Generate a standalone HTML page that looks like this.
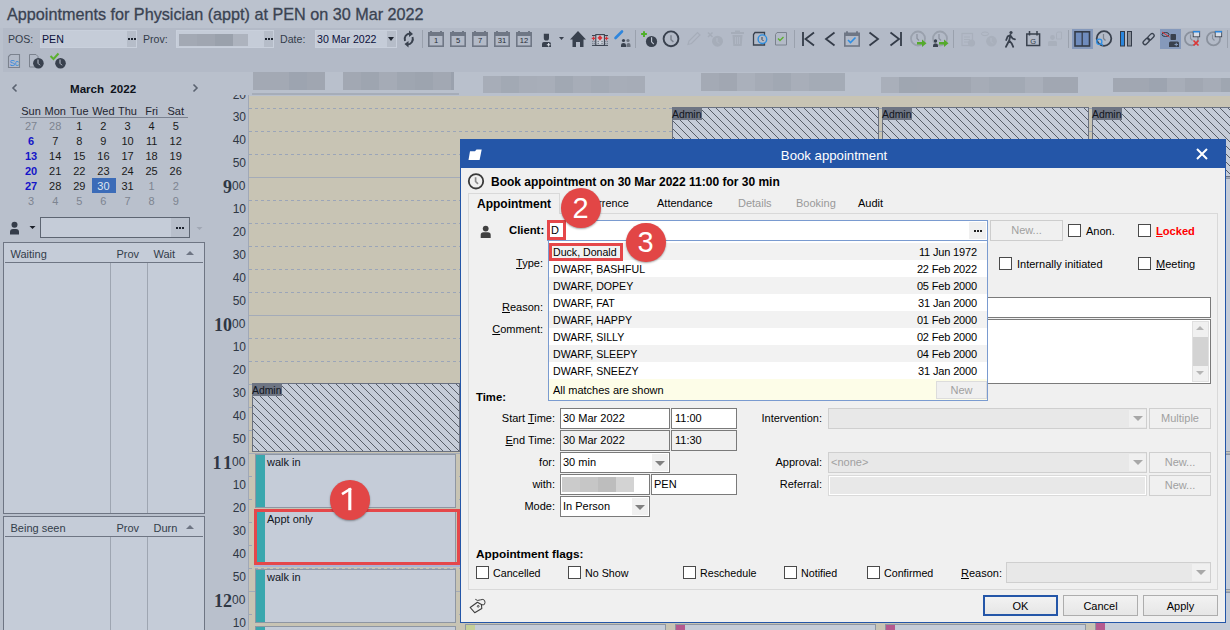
<!DOCTYPE html>
<html><head><meta charset="utf-8">
<style>
*{margin:0;padding:0;box-sizing:border-box}
html,body{width:1230px;height:630px;overflow:hidden;background:#b9c0cc;font-family:"Liberation Sans",sans-serif;font-size:11px;color:#333c4a}
.a{position:absolute}
.t{position:absolute;white-space:pre;line-height:13px}
svg{position:absolute;overflow:visible}
</style></head><body>
<!-- title -->
<div class="a" style="left:0;top:0;width:1230px;height:28px;background:#bbc2ce"></div>
<div class="t" style="left:7px;top:4px;font-size:16.2px;line-height:20px;color:#3a4352;-webkit-text-stroke:0.3px #3a4352">Appointments for Physician (appt) at PEN on 30 Mar 2022</div>
<!-- toolbar band -->
<div id="tb" class="a" style="left:3px;top:28px;width:1227px;height:44px;background:#b3bac7"></div>

<!-- toolbar row1 -->
<div class="t" style="left:8px;top:33px;font-size:10.6px">POS:</div>
<div class="a" style="left:40px;top:30px;width:97px;height:18px;background:#c5ccd8;border:1px solid #c9d0dc"></div>
<div class="a" style="left:127px;top:31px;width:9px;height:16px;background:#b6bdc9"></div>
<div class="t" style="left:42px;top:33px;font-size:10.6px;color:#0a0f3a">PEN</div>
<div class="a" style="left:128px;top:38px;width:2px;height:2px;background:#1e2530;box-shadow:3px 0 #1e2530,6px 0 #1e2530"></div>
<div class="t" style="left:143px;top:33px;font-size:10.6px">Prov:</div>
<div class="a" style="left:176px;top:30px;width:98px;height:18px;background:#c5ccd8;border:1px solid #c9d0dc"></div>
<div class="a" style="left:179px;top:34px;width:69px;height:12px;background:linear-gradient(90deg,#a3a9b4 0 18px,#a0a6b1 18px 36px,#9aa1ac 36px 54px,#adb3be 54px)"></div>
<div class="a" style="left:264px;top:31px;width:9px;height:16px;background:#b6bdc9"></div>
<div class="a" style="left:265px;top:38px;width:2px;height:2px;background:#1e2530;box-shadow:3px 0 #1e2530,6px 0 #1e2530"></div>
<div class="t" style="left:280px;top:33px;font-size:10.6px">Date:</div>
<div class="a" style="left:315px;top:30px;width:82px;height:18px;background:#c5ccd8;border:1px solid #c9d0dc"></div>
<div class="a" style="left:387px;top:31px;width:9px;height:16px;background:#b6bdc9"></div>
<div class="t" style="left:317px;top:33px;font-size:10.6px;color:#0a0f3a">30 Mar 2022</div>
<div class="a" style="left:388px;top:37px;width:0;height:0;border-left:3.5px solid transparent;border-right:3.5px solid transparent;border-top:4px solid #1e2530"></div>
<svg class="a" style="left:0;top:0" width="1230" height="72" viewBox="0 0 1230 72" font-family="Liberation Sans">
<g fill="none" stroke="#39414e" stroke-width="2"><path d="M405 41 A5.5 5.5 0 0 1 410.5 33.5"/><path d="M412.5 37 A5.5 5.5 0 0 1 407 44.5"/></g><path d="M409 30.5 L413 34 L409 37 Z M408.5 47.5 L404.5 44 L408.5 41 Z" fill="#39414e"/>
<line x1="422.5" y1="30" x2="422.5" y2="48" stroke="#9aa1ad" stroke-width="1"/>
<line x1="635.5" y1="30" x2="635.5" y2="48" stroke="#9aa1ad" stroke-width="1"/>
<line x1="794.5" y1="30" x2="794.5" y2="48" stroke="#9aa1ad" stroke-width="1"/>
<line x1="953.5" y1="30" x2="953.5" y2="48" stroke="#9aa1ad" stroke-width="1"/>
<line x1="1068.5" y1="30" x2="1068.5" y2="48" stroke="#9aa1ad" stroke-width="1"/>
<line x1="1227.5" y1="30" x2="1227.5" y2="48" stroke="#9aa1ad" stroke-width="1"/>
<rect x="428" y="32" width="16" height="15" fill="#6f7785"/><rect x="430" y="31" width="2" height="2" fill="#6f7785"/><rect x="440" y="31" width="2" height="2" fill="#6f7785"/>
<rect x="429.6" y="36" width="12.8" height="9.4" fill="#b3bac7"/><text x="436" y="43" font-size="7.6" text-anchor="middle" fill="#262c36">1</text>
<rect x="450" y="32" width="16" height="15" fill="#6f7785"/><rect x="452" y="31" width="2" height="2" fill="#6f7785"/><rect x="462" y="31" width="2" height="2" fill="#6f7785"/>
<rect x="451.6" y="36" width="12.8" height="9.4" fill="#b3bac7"/><text x="458" y="43" font-size="7.6" text-anchor="middle" fill="#262c36">5</text>
<rect x="472" y="32" width="16" height="15" fill="#6f7785"/><rect x="474" y="31" width="2" height="2" fill="#6f7785"/><rect x="484" y="31" width="2" height="2" fill="#6f7785"/>
<rect x="473.6" y="36" width="12.8" height="9.4" fill="#b3bac7"/><text x="480" y="43" font-size="7.6" text-anchor="middle" fill="#262c36">7</text>
<rect x="494" y="32" width="16" height="15" fill="#6f7785"/><rect x="496" y="31" width="2" height="2" fill="#6f7785"/><rect x="506" y="31" width="2" height="2" fill="#6f7785"/>
<rect x="495.6" y="36" width="12.8" height="9.4" fill="#b3bac7"/><text x="502" y="43" font-size="7.6" text-anchor="middle" fill="#262c36">31</text>
<rect x="516" y="32" width="16" height="15" fill="#6f7785"/><rect x="518" y="31" width="2" height="2" fill="#6f7785"/><rect x="528" y="31" width="2" height="2" fill="#6f7785"/>
<rect x="517.6" y="36" width="12.8" height="9.4" fill="#b3bac7"/><text x="524" y="43" font-size="7.6" text-anchor="middle" fill="#262c36">12</text>
<path d="M543.8 33.8 h5.2 v4.2 q0 2.6 -2.6 2.6 q-2.6 0 -2.6 -2.6 z" fill="#39414e"/><path d="M542 46.9 v-3 q0-1.9 1.9-1.9 h5.2 q1.9 0 1.9 1.9 v3 z" fill="#39414e"/><path d="M546.8 44.7 h3.6 M548.6 42.9 v3.6" stroke="#d6dbe3" stroke-width="1.1"/>
<path d="M559 37 L564 37 L561.5 40 Z" fill="#39414e"/>
<path d="M578 31 L586 39.5 L583.5 39.5 L583.5 47 L580 47 L580 42 L576 42 L576 47 L572.5 47 L572.5 39.5 L570 39.5 Z" fill="#39414e"/>
<path d="M592 35.5 h16 M592 45.4 h16" stroke="#39414e" stroke-width="1"/><rect x="595.8" y="34.6" width="8.6" height="10.8" fill="#c8ced8" stroke="#39414e" stroke-width="1.1"/><circle cx="600" cy="37.9" r="1.8" fill="#d8343a"/><path d="M600 35.6 v4.6 M597.7 37.9 h4.6" stroke="#d8343a" stroke-width="1.4"/><path d="M593.5 36.6 v3.6 M591.7 38.4 h3.6 M606.5 36.6 v3.6 M604.7 38.4 h3.6" stroke="#d8343a" stroke-width="1.1"/><path d="M597.5 41.4 h1.5 M601.3 41.4 h1.5 M597.5 43.4 h1.5 M601.3 43.4 h1.5 M592.2 41.4 h1 M593.8 41.4 h1 M592.2 43.4 h1 M593.8 43.4 h1 M605.3 41.4 h1 M606.9 41.4 h1 M605.3 43.4 h1 M606.9 43.4 h1" stroke="#6a717d" stroke-width="0.9"/><path d="M615.5 38 L622 31.5" stroke="#2f86dd" stroke-width="2.6" stroke-linecap="round"/><circle cx="623.5" cy="40.5" r="1.6" fill="#39414e"/><path d="M621 47 v-2 q0-2 2.5-2 q2.5 0 2.5 2 v2z" fill="#39414e"/><circle cx="628" cy="40.5" r="1.6" fill="#6a717d"/><path d="M626.5 47 v-2 q0-2 2-2 q2 0 2 2 v2z" fill="#6a717d"/>
<path d="M644 31.2 v5.8 M641.1 34.1 h5.8" stroke="#4fb02a" stroke-width="2"/><circle cx="651.5" cy="41.5" r="5.6" fill="#39414e"/><path d="M651.6 37.2 v4.6 l2.2 2.3" stroke="#c5ccd8" stroke-width="1.1" fill="none"/>
<circle cx="671" cy="38.8" r="7.4" fill="none" stroke="#39414e" stroke-width="1.9"/><path d="M671 35.2 v4.4 l2.4 2.4" stroke="#7d8490" stroke-width="1.5" fill="none"/>
<path d="M688 44.5 l1-3.5 l8.5-8.5 l2.5 2.5 l-8.5 8.5 z" fill="none" stroke="#a6adb9" stroke-width="1.2"/>
<path d="M708 32.5 l4.5 4.5 M712.5 32.5 l-4.5 4.5" stroke="#a6adb9" stroke-width="1.5"/><circle cx="717.5" cy="41.2" r="5.5" fill="#a6adb9"/><path d="M717 38 v3.5 l2 2" stroke="#b3bac7" stroke-width="1" fill="none"/>
<path d="M731 33 h13 M735 31.5 h5" stroke="#a6adb9" stroke-width="1.8"/><path d="M732.5 35 h10 l-0.8 11 h-8.4 z" fill="#a6adb9"/><path d="M735.5 37 v7 M737.5 37 v7 M739.5 37 v7" stroke="#b3bac7" stroke-width="0.8"/>
<path d="M755 32.5 h9.5 v12.5 h-11 v-10.5 z" fill="none" stroke="#39414e" stroke-width="1.3"/><circle cx="762.4" cy="39.2" r="4.3" fill="#b3bac7" stroke="#2d8ee0" stroke-width="1.4"/><path d="M762 37 v2.5 l1.5 1.5" stroke="#39414e" stroke-width="1" fill="none"/>
<path d="M777 32.5 h9.5 v12.5 h-11 v-10.5 z" fill="none" stroke="#7b828e" stroke-width="1"/><path d="M778 38.5 l2 2 l3.5-3.5" stroke="#5cb030" stroke-width="1.4" fill="none"/>
<g fill="none" stroke="#333b48" stroke-width="1.8"><path d="M803 32 v14"/><path d="M814 32.5 l-8.5 6.5 l8.5 6.5"/><path d="M834.5 32.5 l-8.5 6.5 l8.5 6.5"/><path d="M869.5 32.5 l8.5 6.5 l-8.5 6.5"/><path d="M890.5 32.5 l8.5 6.5 l-8.5 6.5"/><path d="M901 32 v14"/></g>
<rect x="844" y="32.5" width="16" height="14.3" fill="#6f7785"/><rect x="846" y="31.3" width="2" height="2" fill="#6f7785"/><rect x="856" y="31.3" width="2" height="2" fill="#6f7785"/><rect x="845.6" y="36" width="12.8" height="9.2" fill="#b3bac7"/><path d="M848 40 l2.5 2.5 l5-5" stroke="#2f8fe5" stroke-width="1.6" fill="none"/>
<circle cx="918" cy="38.5" r="7" fill="none" stroke="#9aa1ad" stroke-width="1.8"/><path d="M917 34 v4.5 l2 2" stroke="#8a919d" stroke-width="1.2" fill="none"/><path d="M917 42 h5 v-2.5 l4.5 3.8 l-4.5 3.8 v-2.5 h-5 z" fill="#55aa2c"/>
<circle cx="940" cy="38.5" r="7" fill="none" stroke="#9aa1ad" stroke-width="1.8"/><path d="M939 34 v4.5 l2 2" stroke="#8a919d" stroke-width="1.2" fill="none"/><circle cx="935.5" cy="41" r="1.7" fill="#39414e"/><path d="M933 47 v-1.5 q0-2 2.5-2 q2.5 0 2.5 2 v1.5 z" fill="#39414e"/><path d="M939 42 h5 v-2.5 l4.5 3.8 l-4.5 3.8 v-2.5 h-5 z" fill="#55aa2c"/>
<rect x="962" y="33.5" width="10.5" height="12" fill="none" stroke="#a9b0bc" stroke-width="1.2"/><path d="M964 37 h6 M964 39.5 h6 M964 42 h4" stroke="#a9b0bc" stroke-width="1"/><circle cx="971.5" cy="43" r="3.6" fill="#a9b0bc"/>
<ellipse cx="985" cy="33.8" rx="3.6" ry="1.8" fill="none" stroke="#a9b0bc" stroke-width="1"/><circle cx="991.5" cy="41.2" r="5.4" fill="#a9b0bc"/><path d="M991 38 v3.5 l2 2" stroke="#b3bac7" stroke-width="1" fill="none"/>
<circle cx="1011" cy="32.5" r="1.6" fill="#39414e"/><path d="M1010.5 35 l-2.8 1.5 l-1.5 3.5 M1010.5 35 l-1.3 5.5 l2.5 3 l1.5 3.3 M1009.2 40.5 l-1.8 3.5 l-1.5 2.8 M1010.8 36 l1.8 2.5 l2.4 0.8" stroke="#39414e" stroke-width="1.8" fill="none" stroke-linecap="round"/>
<rect x="1026.8" y="34" width="12.8" height="11.5" fill="none" stroke="#39414e" stroke-width="1.5"/><path d="M1029.5 31 v4.5 M1037 31 v4.5" stroke="#39414e" stroke-width="1.5"/><text x="1033.2" y="43.5" font-size="7.5" text-anchor="middle" fill="#39414e">G</text>
<circle cx="1052.5" cy="37.5" r="2.4" fill="#a9b0bc"/><path d="M1048 46 v-3.5 q0-1.5 1.5-1.5 h6 q1.5 0 1.5 1.5 v3.5z" fill="#a9b0bc"/><path d="M1057.5 32 h4 v7 h-5 v-5.5z" fill="none" stroke="#a9b0bc" stroke-width="1"/>
<rect x="1072" y="29" width="21" height="20" fill="#8599bb"/><rect x="1075" y="31.8" width="14.5" height="14.2" fill="#6f8cbd" stroke="#333b48" stroke-width="1.6"/><path d="M1082.2 31.8 v14.2" stroke="#333b48" stroke-width="1.3"/>
<circle cx="1104" cy="38.5" r="7.3" fill="none" stroke="#39414e" stroke-width="1.8"/><path d="M1103.5 34 v4.5 l2 2" stroke="#7a818d" stroke-width="1.2" fill="none"/><circle cx="1099.3" cy="41.8" r="2.6" fill="none" stroke="#2f8fe5" stroke-width="1.3"/><path d="M1101 43.5 l2 2" stroke="#2f8fe5" stroke-width="1.3"/>
<rect x="1120.5" y="31.5" width="4" height="14.5" fill="#2a86dd" stroke="#333b48" stroke-width="1"/><rect x="1127.5" y="31.5" width="4" height="14.5" fill="#8a909a" stroke="#333b48" stroke-width="1"/>
<g transform="rotate(-45 1148.6 39.1)" fill="none" stroke="#39414e" stroke-width="1.3"><rect x="1141.6" y="37.1" width="7.5" height="4" rx="2"/><rect x="1148.1" y="37.1" width="7.5" height="4" rx="2"/></g>
<rect x="1160" y="29" width="21" height="20" fill="#8599bb"/><ellipse cx="1165.5" cy="34.5" rx="3.5" ry="2" fill="none" stroke="#333b48" stroke-width="1"/><path d="M1162 32 l7.5 5" stroke="#e03030" stroke-width="1"/><rect x="1170.5" y="34" width="5.5" height="6" rx="0.8" fill="#39414e"/><path d="M1169 47 v-4 q0-1.5 1.5-1.5 h7 q1.5 0 1.5 1.5 v4z" fill="#39414e"/><path d="M1174.5 44.5 h3.5 M1176.25 42.75 v3.5" stroke="#8599bb" stroke-width="1"/>
<circle cx="1191.5" cy="38.8" r="6.6" fill="none" stroke="#8a919d" stroke-width="1.8"/><path d="M1190.5 34.5 v4 l2 2" stroke="#8a919d" stroke-width="1.1" fill="none"/><rect x="1193.2" y="31.3" width="6.5" height="5.5" fill="#d8dde6" stroke="#333b48" stroke-width="0.8"/><rect x="1193" y="31" width="7" height="1.5" fill="#2a86dd"/><path d="M1193.5 40.5 l5 5 M1198.5 40.5 l-5 5" stroke="#e03535" stroke-width="1.6"/>
<circle cx="1213.5" cy="38.8" r="6.6" fill="none" stroke="#8a919d" stroke-width="1.8"/><path d="M1212.5 34.5 v4 l2 2" stroke="#8a919d" stroke-width="1.1" fill="none"/><rect x="1215.2" y="31.3" width="6.5" height="5.5" fill="#d8dde6" stroke="#333b48" stroke-width="0.8"/><rect x="1215" y="31" width="7" height="1.5" fill="#2a86dd"/>
<path d="M10.5 54.5 h9 v13 h-11 v-11z" fill="none" stroke="#7b828e" stroke-width="1.1"/><text x="14.2" y="66.3" font-size="8.2" text-anchor="middle" fill="#2b86e0">Sc</text>
<path d="M29.5 54.5 h6.5 l2 2 v10.5 h-8.5z" fill="none" stroke="#7b828e" stroke-width="1"/><circle cx="38.4" cy="63.3" r="5.3" fill="#39414e"/><path d="M38 59.5 v3.8 l2 2" stroke="#c0c6d1" stroke-width="1" fill="none"/>
<path d="M50.5 56 l3 3 l5-5.5" stroke="#5cb030" stroke-width="2" fill="none"/><circle cx="60.5" cy="63.3" r="5.3" fill="#39414e"/><path d="M60 59.5 v3.8 l2 2" stroke="#c0c6d1" stroke-width="1" fill="none"/>
</svg>
<!-- left calendar -->
<svg class="a" style="left:0;top:72px" width="205" height="30"><path d="M16.5 12.5 l-3.5 3.5 l3.5 3.5" stroke="#5a6270" stroke-width="1.6" fill="none"/><path d="M193.5 12.5 l3.5 3.5 l-3.5 3.5" stroke="#5a6270" stroke-width="1.6" fill="none"/></svg>
<div class="t" style="left:70px;top:82px;font-weight:bold;font-size:11.6px;word-spacing:3px;color:#0e121a">March 2022</div>
<div class="t" style="left:11px;width:40px;text-align:center;top:105px;color:#1f2530">Sun</div>
<div class="t" style="left:35.2px;width:40px;text-align:center;top:105px;color:#1f2530">Mon</div>
<div class="t" style="left:59.3px;width:40px;text-align:center;top:105px;color:#1f2530">Tue</div>
<div class="t" style="left:83.4px;width:40px;text-align:center;top:105px;color:#1f2530">Wed</div>
<div class="t" style="left:107.5px;width:40px;text-align:center;top:105px;color:#1f2530">Thu</div>
<div class="t" style="left:131.6px;width:40px;text-align:center;top:105px;color:#1f2530">Fri</div>
<div class="t" style="left:155.7px;width:40px;text-align:center;top:105px;color:#1f2530">Sat</div>
<div class="a" style="left:20px;top:117px;width:168px;height:1px;background:#7b8290"></div>
<div class="t" style="left:16px;width:30px;text-align:center;top:119.8px;color:#7d8490">27</div>
<div class="t" style="left:40.2px;width:30px;text-align:center;top:119.8px;color:#7d8490">28</div>
<div class="t" style="left:64.3px;width:30px;text-align:center;top:119.8px;color:#1a1a1a">1</div>
<div class="t" style="left:88.4px;width:30px;text-align:center;top:119.8px;color:#1a1a1a">2</div>
<div class="t" style="left:112.5px;width:30px;text-align:center;top:119.8px;color:#1a1a1a">3</div>
<div class="t" style="left:136.6px;width:30px;text-align:center;top:119.8px;color:#1a1a1a">4</div>
<div class="t" style="left:160.7px;width:30px;text-align:center;top:119.8px;color:#1a1a1a">5</div>
<div class="t" style="left:16px;width:30px;text-align:center;top:135.0px;color:#1414c8;font-weight:bold">6</div>
<div class="t" style="left:40.2px;width:30px;text-align:center;top:135.0px;color:#1a1a1a">7</div>
<div class="t" style="left:64.3px;width:30px;text-align:center;top:135.0px;color:#1a1a1a">8</div>
<div class="t" style="left:88.4px;width:30px;text-align:center;top:135.0px;color:#1a1a1a">9</div>
<div class="t" style="left:112.5px;width:30px;text-align:center;top:135.0px;color:#1a1a1a">10</div>
<div class="t" style="left:136.6px;width:30px;text-align:center;top:135.0px;color:#1a1a1a">11</div>
<div class="t" style="left:160.7px;width:30px;text-align:center;top:135.0px;color:#1a1a1a">12</div>
<div class="t" style="left:16px;width:30px;text-align:center;top:150.0px;color:#1414c8;font-weight:bold">13</div>
<div class="t" style="left:40.2px;width:30px;text-align:center;top:150.0px;color:#1a1a1a">14</div>
<div class="t" style="left:64.3px;width:30px;text-align:center;top:150.0px;color:#1a1a1a">15</div>
<div class="t" style="left:88.4px;width:30px;text-align:center;top:150.0px;color:#1a1a1a">16</div>
<div class="t" style="left:112.5px;width:30px;text-align:center;top:150.0px;color:#1a1a1a">17</div>
<div class="t" style="left:136.6px;width:30px;text-align:center;top:150.0px;color:#1a1a1a">18</div>
<div class="t" style="left:160.7px;width:30px;text-align:center;top:150.0px;color:#1a1a1a">19</div>
<div class="t" style="left:16px;width:30px;text-align:center;top:165.0px;color:#1414c8;font-weight:bold">20</div>
<div class="t" style="left:40.2px;width:30px;text-align:center;top:165.0px;color:#1a1a1a">21</div>
<div class="t" style="left:64.3px;width:30px;text-align:center;top:165.0px;color:#1a1a1a">22</div>
<div class="t" style="left:88.4px;width:30px;text-align:center;top:165.0px;color:#1a1a1a">23</div>
<div class="t" style="left:112.5px;width:30px;text-align:center;top:165.0px;color:#1a1a1a">24</div>
<div class="t" style="left:136.6px;width:30px;text-align:center;top:165.0px;color:#1a1a1a">25</div>
<div class="t" style="left:160.7px;width:30px;text-align:center;top:165.0px;color:#1a1a1a">26</div>
<div class="t" style="left:16px;width:30px;text-align:center;top:180.0px;color:#1414c8;font-weight:bold">27</div>
<div class="t" style="left:40.2px;width:30px;text-align:center;top:180.0px;color:#1a1a1a">28</div>
<div class="t" style="left:64.3px;width:30px;text-align:center;top:180.0px;color:#1a1a1a">29</div>
<div class="a" style="left:92px;top:178px;width:24px;height:15px;background:#3c6cb8"></div>
<div class="t" style="left:88.4px;width:30px;text-align:center;top:180.0px;color:#dfe5ef">30</div>
<div class="t" style="left:112.5px;width:30px;text-align:center;top:180.0px;color:#1a1a1a">31</div>
<div class="t" style="left:136.6px;width:30px;text-align:center;top:180.0px;color:#7d8490">1</div>
<div class="t" style="left:160.7px;width:30px;text-align:center;top:180.0px;color:#7d8490">2</div>
<div class="t" style="left:16px;width:30px;text-align:center;top:195.0px;color:#7d8490">3</div>
<div class="t" style="left:40.2px;width:30px;text-align:center;top:195.0px;color:#7d8490">4</div>
<div class="t" style="left:64.3px;width:30px;text-align:center;top:195.0px;color:#7d8490">5</div>
<div class="t" style="left:88.4px;width:30px;text-align:center;top:195.0px;color:#7d8490">6</div>
<div class="t" style="left:112.5px;width:30px;text-align:center;top:195.0px;color:#7d8490">7</div>
<div class="t" style="left:136.6px;width:30px;text-align:center;top:195.0px;color:#7d8490">8</div>
<div class="t" style="left:160.7px;width:30px;text-align:center;top:195.0px;color:#7d8490">9</div>
<svg class="a" style="left:0;top:215px" width="205" height="25"><circle cx="14.5" cy="9.8" r="3" fill="#353d4a"/><path d="M10 19.5 v-2.5 q0-3 3-3 h3 q3 0 3 3 v2.5z" fill="#353d4a"/><path d="M29.5 11 h6 l-3 3z" fill="#1a1f28"/><path d="M196.5 12 h6 l-3 3z" fill="#a0a7b3"/></svg>
<div class="a" style="left:40px;top:217px;width:150px;height:21px;border:1px solid #5d6572;background:#c5ccd8"></div>
<div class="a" style="left:171px;top:218px;width:18px;height:19px;background:#b8bfcb"></div>
<div class="a" style="left:176px;top:227px;width:2px;height:2px;background:#1e2530;box-shadow:3px 0 #1e2530,6px 0 #1e2530"></div>
<div class="a" style="left:3px;top:242px;width:202px;height:272px;border:1px solid #6e7583;background:#c5ccd8"></div>
<div class="a" style="left:5px;top:262px;width:198px;height:1px;background:#6e7583"></div>
<div class="a" style="left:110px;top:263px;width:1px;height:250px;background:#9ea5b1"></div>
<div class="a" style="left:147px;top:263px;width:1px;height:250px;background:#9ea5b1"></div>
<div class="t" style="left:10.5px;top:248px">Waiting</div><div class="t" style="left:116.5px;top:248px">Prov</div><div class="t" style="left:153.5px;top:248px">Wait</div>
<div class="a" style="left:186px;top:251px;width:0;height:0;border-left:4px solid transparent;border-right:4px solid transparent;border-bottom:4px solid #6e7583"></div>
<div class="a" style="left:3px;top:516px;width:202px;height:120px;border:1px solid #6e7583;background:#c5ccd8"></div>
<div class="a" style="left:5px;top:536px;width:198px;height:1px;background:#6e7583"></div>
<div class="a" style="left:110px;top:537px;width:1px;height:98px;background:#9ea5b1"></div>
<div class="a" style="left:147px;top:537px;width:1px;height:98px;background:#9ea5b1"></div>
<div class="t" style="left:10.5px;top:522px">Being seen</div><div class="t" style="left:116.5px;top:522px">Prov</div><div class="t" style="left:153.5px;top:522px">Durn</div>
<div class="a" style="left:186px;top:525px;width:0;height:0;border-left:4px solid transparent;border-right:4px solid transparent;border-bottom:4px solid #6e7583"></div>
<!-- time column & schedule -->
<div class="a" style="left:205px;top:72px;width:44px;height:558px;background:#b9c0cc"></div>
<div class="a" style="left:248px;top:95px;width:1px;height:535px;background:#a0a8b6"></div>
<div class="a" style="left:249px;top:96px;width:981px;height:534px;background:#c8c4b4"></div>
<div class="a" style="left:252px;top:93px;width:207px;height:2px;background:#a6adb9"></div>
<svg class="a" style="left:0;top:0" width="1230" height="630">
<line x1="249" y1="108.5" x2="1230" y2="108.5" stroke="#9ba5b8" stroke-width="1" stroke-dasharray="3 3"/>
<line x1="249" y1="131.5" x2="1230" y2="131.5" stroke="#9ba5b8" stroke-width="1" stroke-dasharray="3 3"/>
<line x1="249" y1="154.5" x2="1230" y2="154.5" stroke="#9ba5b8" stroke-width="1" stroke-dasharray="3 3"/>
<line x1="249" y1="177.5" x2="1230" y2="177.5" stroke="#a4abb8" stroke-width="1"/>
<line x1="249" y1="200.5" x2="1230" y2="200.5" stroke="#9ba5b8" stroke-width="1" stroke-dasharray="3 3"/>
<line x1="249" y1="223.5" x2="1230" y2="223.5" stroke="#9ba5b8" stroke-width="1" stroke-dasharray="3 3"/>
<line x1="249" y1="246.5" x2="1230" y2="246.5" stroke="#9ba5b8" stroke-width="1" stroke-dasharray="3 3"/>
<line x1="249" y1="269.5" x2="1230" y2="269.5" stroke="#9ba5b8" stroke-width="1" stroke-dasharray="3 3"/>
<line x1="249" y1="292.5" x2="1230" y2="292.5" stroke="#9ba5b8" stroke-width="1" stroke-dasharray="3 3"/>
<line x1="249" y1="315.5" x2="1230" y2="315.5" stroke="#a4abb8" stroke-width="1"/>
<line x1="249" y1="338.5" x2="1230" y2="338.5" stroke="#9ba5b8" stroke-width="1" stroke-dasharray="3 3"/>
<line x1="249" y1="361.5" x2="1230" y2="361.5" stroke="#9ba5b8" stroke-width="1" stroke-dasharray="3 3"/>
<line x1="249" y1="384.5" x2="1230" y2="384.5" stroke="#9ba5b8" stroke-width="1" stroke-dasharray="3 3"/>
<line x1="249" y1="407.5" x2="1230" y2="407.5" stroke="#9ba5b8" stroke-width="1" stroke-dasharray="3 3"/>
<line x1="249" y1="430.5" x2="1230" y2="430.5" stroke="#9ba5b8" stroke-width="1" stroke-dasharray="3 3"/>
<line x1="249" y1="453.5" x2="1230" y2="453.5" stroke="#a4abb8" stroke-width="1"/>
<line x1="249" y1="476.5" x2="1230" y2="476.5" stroke="#9ba5b8" stroke-width="1" stroke-dasharray="3 3"/>
<line x1="249" y1="499.5" x2="1230" y2="499.5" stroke="#9ba5b8" stroke-width="1" stroke-dasharray="3 3"/>
<line x1="249" y1="522.5" x2="1230" y2="522.5" stroke="#9ba5b8" stroke-width="1" stroke-dasharray="3 3"/>
<line x1="249" y1="545.5" x2="1230" y2="545.5" stroke="#9ba5b8" stroke-width="1" stroke-dasharray="3 3"/>
<line x1="249" y1="568.5" x2="1230" y2="568.5" stroke="#9ba5b8" stroke-width="1" stroke-dasharray="3 3"/>
<line x1="249" y1="591.5" x2="1230" y2="591.5" stroke="#a4abb8" stroke-width="1"/>
<line x1="249" y1="614.5" x2="1230" y2="614.5" stroke="#9ba5b8" stroke-width="1" stroke-dasharray="3 3"/>
</svg>
<div class="t" style="left:205px;width:41px;text-align:right;top:111px;font-size:12px;line-height:13px;color:#2f3744">30</div>
<div class="t" style="left:205px;width:41px;text-align:right;top:134px;font-size:12px;line-height:13px;color:#2f3744">40</div>
<div class="t" style="left:205px;width:41px;text-align:right;top:157px;font-size:12px;line-height:13px;color:#2f3744">50</div>
<div class="t" style="left:205px;width:27px;text-align:right;top:178px;font-family:'Liberation Serif',serif;font-weight:bold;font-size:18px;line-height:18px;color:#2f3744">9</div>
<div class="t" style="left:232px;top:180px;font-size:12px;line-height:13px;color:#2f3744">00</div>
<div class="t" style="left:205px;width:41px;text-align:right;top:203px;font-size:12px;line-height:13px;color:#2f3744">10</div>
<div class="t" style="left:205px;width:41px;text-align:right;top:226px;font-size:12px;line-height:13px;color:#2f3744">20</div>
<div class="t" style="left:205px;width:41px;text-align:right;top:249px;font-size:12px;line-height:13px;color:#2f3744">30</div>
<div class="t" style="left:205px;width:41px;text-align:right;top:272px;font-size:12px;line-height:13px;color:#2f3744">40</div>
<div class="t" style="left:205px;width:41px;text-align:right;top:295px;font-size:12px;line-height:13px;color:#2f3744">50</div>
<div class="t" style="left:205px;width:27px;text-align:right;top:316px;font-family:'Liberation Serif',serif;font-weight:bold;font-size:18px;line-height:18px;color:#2f3744">10</div>
<div class="t" style="left:232px;top:318px;font-size:12px;line-height:13px;color:#2f3744">00</div>
<div class="t" style="left:205px;width:41px;text-align:right;top:341px;font-size:12px;line-height:13px;color:#2f3744">10</div>
<div class="t" style="left:205px;width:41px;text-align:right;top:364px;font-size:12px;line-height:13px;color:#2f3744">20</div>
<div class="t" style="left:205px;width:41px;text-align:right;top:387px;font-size:12px;line-height:13px;color:#2f3744">30</div>
<div class="t" style="left:205px;width:41px;text-align:right;top:410px;font-size:12px;line-height:13px;color:#2f3744">40</div>
<div class="t" style="left:205px;width:41px;text-align:right;top:433px;font-size:12px;line-height:13px;color:#2f3744">50</div>
<div class="t" style="left:205px;width:29.5px;text-align:right;top:454px;font-family:'Liberation Serif',serif;font-weight:bold;font-size:18px;line-height:18px;color:#2f3744;letter-spacing:2.5px">11</div>
<div class="t" style="left:232px;top:456px;font-size:12px;line-height:13px;color:#2f3744">00</div>
<div class="t" style="left:205px;width:41px;text-align:right;top:479px;font-size:12px;line-height:13px;color:#2f3744">10</div>
<div class="t" style="left:205px;width:41px;text-align:right;top:502px;font-size:12px;line-height:13px;color:#2f3744">20</div>
<div class="t" style="left:205px;width:41px;text-align:right;top:525px;font-size:12px;line-height:13px;color:#2f3744">30</div>
<div class="t" style="left:205px;width:41px;text-align:right;top:548px;font-size:12px;line-height:13px;color:#2f3744">40</div>
<div class="t" style="left:205px;width:41px;text-align:right;top:571px;font-size:12px;line-height:13px;color:#2f3744">50</div>
<div class="t" style="left:205px;width:27px;text-align:right;top:592px;font-family:'Liberation Serif',serif;font-weight:bold;font-size:18px;line-height:18px;color:#2f3744">12</div>
<div class="t" style="left:232px;top:594px;font-size:12px;line-height:13px;color:#2f3744">00</div>
<div class="t" style="left:205px;width:41px;text-align:right;top:617px;font-size:12px;line-height:13px;color:#2f3744">10</div>
<svg class="a" style="left:0;top:0" width="1230" height="630">
<defs><pattern id="h" patternUnits="userSpaceOnUse" width="8" height="8"><rect width="8" height="8" fill="#c5ccd8"/><path d="M-2 -2 L10 10 M-2 6 L2 10 M6 -2 L10 2" stroke="#434953" stroke-width="0.85"/></pattern></defs>
<rect x="252.5" y="383.5" width="207" height="68" fill="url(#h)" stroke="#6a7180" stroke-width="1"/>
<rect x="672.5" y="107.5" width="206" height="69" fill="url(#h)" stroke="#6a7180" stroke-width="1"/>
<rect x="882.5" y="107.5" width="206" height="69" fill="url(#h)" stroke="#6a7180" stroke-width="1"/>
<rect x="1092.5" y="107.5" width="140" height="69" fill="url(#h)" stroke="#6a7180" stroke-width="1"/>
</svg>
<div class="a" style="left:252px;top:383px;width:30px;height:13px;background:#6e7583"></div><div class="t" style="left:252px;top:384px;color:#10141c;font-size:10.4px">Admin</div>
<div class="a" style="left:672px;top:107px;width:30px;height:13px;background:#6e7583"></div><div class="t" style="left:672px;top:108px;color:#10141c;font-size:10.4px">Admin</div>
<div class="a" style="left:882px;top:107px;width:30px;height:13px;background:#6e7583"></div><div class="t" style="left:882px;top:108px;color:#10141c;font-size:10.4px">Admin</div>
<div class="a" style="left:1092px;top:107px;width:30px;height:13px;background:#6e7583"></div><div class="t" style="left:1092px;top:108px;color:#10141c;font-size:10.4px">Admin</div>
<div class="a" style="left:255px;top:454px;width:201px;height:54px;background:#c5ccd8;border:1px solid #8e96a3"><div class="a" style="left:0;top:0;width:9px;height:100%;background:#3aa7ae"></div></div><div class="t" style="left:267px;top:456px;color:#10141c">walk in</div>
<div class="a" style="left:255px;top:511px;width:201px;height:54px;background:#c5ccd8;border:1px solid #8e96a3"><div class="a" style="left:0;top:0;width:9px;height:100%;background:#3aa7ae"></div></div><div class="t" style="left:267px;top:513px;color:#10141c">Appt only</div>
<div class="a" style="left:255px;top:569px;width:201px;height:54px;background:#c5ccd8;border:1px solid #8e96a3"><div class="a" style="left:0;top:0;width:9px;height:100%;background:#3aa7ae"></div></div><div class="t" style="left:267px;top:571px;color:#10141c">walk in</div>
<div class="a" style="left:255px;top:626px;width:201px;height:54px;background:#c5ccd8;border:1px solid #8e96a3"><div class="a" style="left:0;top:0;width:9px;height:100%;background:#3aa7ae"></div></div>
<div class="a" style="left:465px;top:624px;width:201px;height:54px;background:#c5ccd8;border:1px solid #8e96a3"><div class="a" style="left:0;top:0;width:9px;height:100%;background:#c5cf98"></div></div>
<div class="a" style="left:675px;top:624px;width:201px;height:54px;background:#c5ccd8;border:1px solid #8e96a3"><div class="a" style="left:0;top:0;width:9px;height:100%;background:#b55a8f"></div></div>
<div class="a" style="left:885px;top:624px;width:201px;height:54px;background:#c5ccd8;border:1px solid #8e96a3"><div class="a" style="left:0;top:0;width:9px;height:100%;background:#b55a8f"></div></div>
<div class="a" style="left:1095px;top:624px;width:201px;height:54px;background:#c5ccd8;border:1px solid #8e96a3"><div class="a" style="left:0;top:0;width:9px;height:100%;background:#b55a8f"></div></div>
<div class="a" style="left:1095px;top:178px;width:201px;height:274px;background:#c5ccd8;border:1px solid #8e96a3"><div class="a" style="left:0;top:0;width:9px;height:100%;background:#b55a8f"></div></div><div class="a" style="left:1095px;top:454px;width:201px;height:136px;background:#c5ccd8;border:1px solid #8e96a3"><div class="a" style="left:0;top:0;width:9px;height:100%;background:#b55a8f"></div></div><div class="a" style="left:1095px;top:592px;width:201px;height:60px;background:#c5ccd8;border:1px solid #8e96a3"><div class="a" style="left:0;top:0;width:9px;height:100%;background:#b55a8f"></div></div>
<div class="a" style="left:254px;top:509px;width:206px;height:56px;border:3px solid #e5474a"></div>
<div class="a" style="left:254px;top:565px;width:206px;height:2px;background:#aab4d6"></div>
<div class="a" style="left:253px;top:72px;width:72px;height:18px;display:flex;overflow:hidden"><div style="width:18px;height:100%;flex:none;background:#a3a9b4"></div><div style="width:18px;height:100%;flex:none;background:#a3a9b4"></div><div style="width:18px;height:100%;flex:none;background:#9da4b0"></div><div style="width:18px;height:100%;flex:none;background:#a0a6b1"></div></div>
<div class="a" style="left:343px;top:72px;width:111px;height:18px;display:flex;overflow:hidden"><div style="width:18px;height:100%;flex:none;background:#a2a8b3"></div><div style="width:18px;height:100%;flex:none;background:#9ea5b0"></div><div style="width:18px;height:100%;flex:none;background:#a5abb6"></div><div style="width:18px;height:100%;flex:none;background:#9fa6b1"></div><div style="width:18px;height:100%;flex:none;background:#9da4af"></div><div style="width:18px;height:100%;flex:none;background:#a2a8b3"></div><div style="width:18px;height:100%;flex:none;background:#9aa1ad"></div></div>
<div class="a" style="left:483px;top:76px;width:162px;height:17px;display:flex;overflow:hidden"><div style="width:18px;height:100%;flex:none;background:#a7adb8"></div><div style="width:18px;height:100%;flex:none;background:#a2a9b4"></div><div style="width:18px;height:100%;flex:none;background:#a7adb8"></div><div style="width:18px;height:100%;flex:none;background:#a8aeb9"></div><div style="width:18px;height:100%;flex:none;background:#a1a8b3"></div><div style="width:18px;height:100%;flex:none;background:#a7adb8"></div><div style="width:18px;height:100%;flex:none;background:#a3aab5"></div><div style="width:18px;height:100%;flex:none;background:#a7adb8"></div><div style="width:18px;height:100%;flex:none;background:#a6acb7"></div></div>
<div class="a" style="left:701px;top:73px;width:144px;height:18px;display:flex;overflow:hidden"><div style="width:18px;height:100%;flex:none;background:#a4aab5"></div><div style="width:18px;height:100%;flex:none;background:#a1a7b2"></div><div style="width:18px;height:100%;flex:none;background:#aab0bb"></div><div style="width:18px;height:100%;flex:none;background:#a5abb6"></div><div style="width:18px;height:100%;flex:none;background:#a1a8b3"></div><div style="width:18px;height:100%;flex:none;background:#a8aeb9"></div><div style="width:18px;height:100%;flex:none;background:#a4abb6"></div><div style="width:18px;height:100%;flex:none;background:#a4abb6"></div></div>
<div class="a" style="left:881px;top:77px;width:197px;height:16px;display:flex;overflow:hidden"><div style="width:18px;height:100%;flex:none;background:#a9afba"></div><div style="width:18px;height:100%;flex:none;background:#9fa6b1"></div><div style="width:18px;height:100%;flex:none;background:#a0a6b1"></div><div style="width:18px;height:100%;flex:none;background:#a0a6b1"></div><div style="width:18px;height:100%;flex:none;background:#a0a6b1"></div><div style="width:18px;height:100%;flex:none;background:#a6acb7"></div><div style="width:18px;height:100%;flex:none;background:#a2a9b4"></div><div style="width:18px;height:100%;flex:none;background:#a2a9b4"></div><div style="width:18px;height:100%;flex:none;background:#a9afba"></div><div style="width:18px;height:100%;flex:none;background:#a1a7b2"></div><div style="width:18px;height:100%;flex:none;background:#a1a7b2"></div></div>
<div class="a" style="left:1113px;top:78px;width:117px;height:14px;display:flex;overflow:hidden"><div style="width:18px;height:100%;flex:none;background:#a1a7b2"></div><div style="width:18px;height:100%;flex:none;background:#a1a7b2"></div><div style="width:18px;height:100%;flex:none;background:#9da4b0"></div><div style="width:18px;height:100%;flex:none;background:#a7adb8"></div><div style="width:18px;height:100%;flex:none;background:#a1a7b2"></div><div style="width:18px;height:100%;flex:none;background:#a6acb7"></div><div style="width:18px;height:100%;flex:none;background:#9fa6b1"></div></div>
<div class="a" style="left:330px;top:480px;width:39.5px;height:39.5px;border-radius:50%;background:#e24646;box-shadow:0 1px 2px rgba(0,0,0,0.35)"></div><svg class="a" style="left:328px;top:480px" width="40" height="40"><path d="M21.8 8.3 V30.2" stroke="#fff" stroke-width="3.1"/><path d="M23 8.5 L14 14.2" stroke="#fff" stroke-width="2.6"/></svg>
<div class="a" style="left:205px;top:95px;width:43px;height:20px;overflow:hidden"><div class="t" style="left:0;width:41px;text-align:right;top:-6px;font-size:12px;line-height:13px;color:#2f3744">20</div></div>
<!-- dialog -->
<div class="a" style="left:460px;top:139px;width:766px;height:484px;background:#f0f0f0;border:1px solid #2456a8"></div>
<div class="a" style="left:460px;top:139px;width:766px;height:29px;background:#2456a8"></div>
<svg class="a" style="left:460px;top:139px" width="30" height="29"><path d="M8.5 21 L10 12.2 L15 12.2 L16.5 10.4 L21.7 10.4 L19.6 21 Z" fill="#fff"/></svg>
<div class="t" style="left:740px;width:188px;text-align:center;top:148px;font-size:13.2px;line-height:16px;color:#fff">Book appointment</div>
<svg class="a" style="left:1190px;top:143px" width="24" height="24"><path d="M7 6 L17 16 M17 6 L7 16" stroke="#fff" stroke-width="2"/></svg>
<svg class="a" style="left:460px;top:168px" width="30" height="26"><circle cx="16" cy="13.3" r="7.2" fill="none" stroke="#3a3a3a" stroke-width="1.8"/><path d="M15.6 9.2 v4.3 l2.4 2.4" stroke="#8c8c8c" stroke-width="1.7" fill="none"/></svg>
<div class="t" style="left:491px;top:175px;font-weight:bold;font-size:12px;line-height:14px;color:#000">Book appointment on 30 Mar 2022 11:00 for 30 min</div>
<div class="a" style="left:468px;top:213px;width:750px;height:377px;border:1px solid #d9d9d9"></div>
<div class="a" style="left:468px;top:193px;width:92px;height:21px;background:#f0f0f0;border:1px solid #d9d9d9;border-bottom:none"></div>
<div class="t" style="left:477px;top:197px;font-weight:bold;font-size:12px;line-height:14px;color:#000">Appointment</div>
<div class="t" style="left:573px;top:197px;color:#000;font-size:10.8px">Recurrence</div>
<div class="t" style="left:657px;top:197px;color:#000">Attendance</div>
<div class="t" style="left:738px;top:197px;color:#999">Details</div>
<div class="t" style="left:796px;top:197px;color:#999">Booking</div>
<div class="t" style="left:858px;top:197px;color:#000">Audit</div>
<svg class="a" style="left:476px;top:222px" width="20" height="20"><circle cx="9.7" cy="6.6" r="2.9" fill="#404040"/><path d="M4.7 16 v-3 q0-2.8 2.8-2.8 h4.4 q2.8 0 2.8 2.8 v3z" fill="#404040"/></svg>
<div class="t" style="left:509px;top:224px;font-weight:bold;font-size:11.3px;color:#000">Client:</div>
<div class="a" style="left:547px;top:220px;width:441px;height:21px;background:#fff;border:1px solid #7a9bd0"></div>
<div class="a" style="left:969px;top:222px;width:17px;height:17px;background:#f0f0f0"></div>
<div class="a" style="left:974px;top:230px;width:2px;height:2px;background:#222;box-shadow:3px 0 #222,6px 0 #222"></div>
<div class="t" style="left:551px;top:224px;color:#000">D</div>
<div class="a" style="left:990px;top:220px;width:73px;height:21px;background:#f0f0f0;border:1px solid #cdcdcd"></div>
<div class="t" style="left:990px;width:73px;text-align:center;top:224px;color:#a0a0a0">New...</div>
<div class="a" style="left:1068px;top:224px;width:13px;height:13px;background:#fff;border:1px solid #4a4a4a"></div>
<div class="t" style="left:1086px;top:225px;color:#000">Anon.</div>
<div class="a" style="left:1138px;top:224px;width:13px;height:13px;background:#fff;border:1px solid #4a4a4a"></div>
<div class="t" style="left:1156px;top:225px;font-weight:bold;font-size:11.1px;color:#f00"><u style="text-decoration-thickness:1px;text-underline-offset:1px">L</u>ocked</div>
<div class="a" style="left:999px;top:257px;width:13px;height:13px;background:#fff;border:1px solid #4a4a4a"></div>
<div class="t" style="left:1017px;top:258px;color:#000">Internally initiated</div>
<div class="a" style="left:1138px;top:257px;width:13px;height:13px;background:#fff;border:1px solid #4a4a4a"></div>
<div class="t" style="left:1156px;top:258px;color:#000"><u style="text-decoration-thickness:1px;text-underline-offset:1px">M</u>eeting</div>
<div class="t" style="left:343px;width:200px;text-align:right;top:257px;color:#000"><u style="text-decoration-thickness:1px;text-underline-offset:1px">T</u>ype:</div>
<div class="t" style="left:343px;width:200px;text-align:right;top:301px;color:#000"><u style="text-decoration-thickness:1px;text-underline-offset:1px">R</u>eason:</div>
<div class="t" style="left:343px;width:200px;text-align:right;top:323px;color:#000"><u style="text-decoration-thickness:1px;text-underline-offset:1px">C</u>omment:</div>
<div class="a" style="left:560px;top:297px;width:651px;height:21px;background:#fff;border:1px solid #7a7a7a"></div>
<div class="a" style="left:560px;top:319px;width:651px;height:65px;background:#fff;border:1px solid #7a7a7a"></div>
<div class="a" style="left:1192px;top:321px;width:17px;height:61px;background:#f0f0f0;border:1px solid #e0e0e0"></div>
<div class="a" style="left:1193px;top:337px;width:15px;height:29px;background:#d3d3d3"></div>
<div class="a" style="left:1196px;top:326px;width:0;height:0;border-left:4.5px solid transparent;border-right:4.5px solid transparent;border-bottom:4px solid #b5b5b5"></div>
<div class="a" style="left:1196px;top:371px;width:0;height:0;border-left:4.5px solid transparent;border-right:4.5px solid transparent;border-top:4px solid #b5b5b5"></div>
<div class="t" style="left:476px;top:391px;font-weight:bold;font-size:11.3px;color:#000">Time:</div>
<div class="t" style="left:355px;width:200px;text-align:right;top:412px;color:#000">Start <u style="text-decoration-thickness:1px;text-underline-offset:1px">T</u>ime:</div>
<div class="t" style="left:355px;width:200px;text-align:right;top:434px;color:#000"><u style="text-decoration-thickness:1px;text-underline-offset:1px">E</u>nd Time:</div>
<div class="t" style="left:355px;width:200px;text-align:right;top:456px;color:#000">for:</div>
<div class="t" style="left:355px;width:200px;text-align:right;top:478px;color:#000">with:</div>
<div class="t" style="left:355px;width:200px;text-align:right;top:500px;color:#000">Mode:</div>
<div class="a" style="left:560px;top:408px;width:110px;height:21px;background:#fff;border:1px solid #7a7a7a"></div>
<div class="a" style="left:671px;top:408px;width:66px;height:21px;background:#fff;border:1px solid #7a7a7a"></div>
<div class="t" style="left:563px;top:412px;color:#000">30 Mar 2022</div>
<div class="t" style="left:675px;top:412px;color:#000">11:00</div>
<div class="a" style="left:560px;top:430px;width:110px;height:21px;background:#f0f0f0;border:1px solid #7a7a7a"></div>
<div class="a" style="left:671px;top:430px;width:66px;height:21px;background:#f0f0f0;border:1px solid #7a7a7a"></div>
<div class="t" style="left:563px;top:434px;color:#000">30 Mar 2022</div>
<div class="t" style="left:675px;top:434px;color:#000">11:30</div>
<div class="a" style="left:560px;top:452px;width:110px;height:21px;background:#fff;border:1px solid #7a7a7a"></div>
<div class="a" style="left:652px;top:454px;width:16px;height:17px;background:#f0f0f0"></div>
<div class="a" style="left:655px;top:461px;width:0;height:0;border-left:5px solid transparent;border-right:5px solid transparent;border-top:5px solid #808080"></div>
<div class="t" style="left:563px;top:456px;color:#000">30 min</div>
<div class="a" style="left:560px;top:474px;width:90px;height:21px;background:#fff;border:1px solid #7a7a7a"></div>
<div class="a" style="left:562px;top:477px;width:72px;height:15px;background:linear-gradient(90deg,#cbcbcb 0 18px,#c6c6c6 18px 36px,#bdbdbd 36px 54px,#d3d3d3 54px)"></div>
<div class="a" style="left:651px;top:474px;width:86px;height:21px;background:#fff;border:1px solid #7a7a7a"></div>
<div class="t" style="left:654px;top:478px;color:#000">PEN</div>
<div class="a" style="left:560px;top:496px;width:90px;height:21px;background:#fff;border:1px solid #7a7a7a"></div>
<div class="a" style="left:632px;top:498px;width:16px;height:17px;background:#f0f0f0"></div>
<div class="a" style="left:635px;top:505px;width:0;height:0;border-left:5px solid transparent;border-right:5px solid transparent;border-top:5px solid #808080"></div>
<div class="t" style="left:563px;top:500px;color:#000">In Person</div>
<div class="t" style="left:622px;width:200px;text-align:right;top:412px;color:#000">Intervention:</div>
<div class="t" style="left:622px;width:200px;text-align:right;top:456px;color:#000">Approval:</div>
<div class="t" style="left:622px;width:200px;text-align:right;top:478px;color:#000">Referral:</div>
<div class="a" style="left:828px;top:408px;width:319px;height:21px;background:#e8e8e8;border:1px solid #cfcfcf"></div>
<div class="a" style="left:1129px;top:410px;width:17px;height:17px;background:#f0f0f0"></div>
<div class="a" style="left:1133px;top:416px;width:0;height:0;border-left:5px solid transparent;border-right:5px solid transparent;border-top:5px solid #a8a8a8"></div>
<div class="a" style="left:1149px;top:408px;width:62px;height:21px;background:#f0f0f0;border:1px solid #cfcfcf"></div>
<div class="t" style="left:1149px;width:62px;text-align:center;top:412px;color:#a0a0a0">Multiple</div>
<div class="a" style="left:828px;top:452px;width:319px;height:21px;background:#e8e8e8;border:1px solid #cfcfcf"></div>
<div class="a" style="left:1129px;top:454px;width:17px;height:17px;background:#f0f0f0"></div>
<div class="a" style="left:1133px;top:460px;width:0;height:0;border-left:5px solid transparent;border-right:5px solid transparent;border-top:5px solid #a8a8a8"></div>
<div class="t" style="left:831px;top:456px;color:#a0a0a0">&lt;none&gt;</div>
<div class="a" style="left:1149px;top:452px;width:62px;height:21px;background:#f0f0f0;border:1px solid #cfcfcf"></div>
<div class="t" style="left:1149px;width:62px;text-align:center;top:456px;color:#a0a0a0">New...</div>
<div class="a" style="left:828px;top:475px;width:319px;height:21px;background:#e8e8e8;border:1px solid #dadada;box-shadow:inset 0 0 0 1px #fff"></div>
<div class="a" style="left:1149px;top:475px;width:62px;height:21px;background:#f0f0f0;border:1px solid #cfcfcf"></div>
<div class="t" style="left:1149px;width:62px;text-align:center;top:479px;color:#a0a0a0">New...</div>
<div class="t" style="left:476px;top:548px;font-weight:bold;font-size:11.8px;color:#000">Appointment flags:</div>
<div class="a" style="left:476px;top:566px;width:13px;height:13px;background:#fff;border:1px solid #4a4a4a"></div>
<div class="t" style="left:493px;top:567px;color:#000;font-size:10.7px">Cancelled</div>
<div class="a" style="left:568px;top:566px;width:13px;height:13px;background:#fff;border:1px solid #4a4a4a"></div>
<div class="t" style="left:585px;top:567px;color:#000;font-size:10.7px">No Show</div>
<div class="a" style="left:683px;top:566px;width:13px;height:13px;background:#fff;border:1px solid #4a4a4a"></div>
<div class="t" style="left:700px;top:567px;color:#000;font-size:10.7px">Reschedule</div>
<div class="a" style="left:784px;top:566px;width:13px;height:13px;background:#fff;border:1px solid #4a4a4a"></div>
<div class="t" style="left:801px;top:567px;color:#000;font-size:10.7px">Notified</div>
<div class="a" style="left:867px;top:566px;width:13px;height:13px;background:#fff;border:1px solid #4a4a4a"></div>
<div class="t" style="left:884px;top:567px;color:#000;font-size:10.7px">Confirmed</div>
<div class="t" style="left:961px;top:567px;color:#000"><u style="text-decoration-thickness:1px;text-underline-offset:1px">R</u>eason:</div>
<div class="a" style="left:1006px;top:562px;width:205px;height:21px;background:#e8e8e8;border:1px solid #cfcfcf"></div>
<div class="a" style="left:1192px;top:564px;width:18px;height:17px;background:#f0f0f0"></div>
<div class="a" style="left:1196px;top:570px;width:0;height:0;border-left:5px solid transparent;border-right:5px solid transparent;border-top:5px solid #a8a8a8"></div>
<svg class="a" style="left:466px;top:595px" width="24" height="22"><path d="M4.2 12.5 L11.4 7.3 L15.4 9.4 L15.8 13.5 L8.7 17.7 Z" fill="none" stroke="#3c3c3c" stroke-width="1.1" stroke-linejoin="round"/><circle cx="12.2" cy="11.3" r="0.9" fill="none" stroke="#3c3c3c" stroke-width="0.9"/><path d="M9.3 4.3 q2 2 5 0.6 q3 -1.2 4.2 0.4 q1 2 0 4 q-1 1 -3.5 0.3" fill="none" stroke="#3c3c3c" stroke-width="1"/></svg>
<div class="a" style="left:983px;top:595px;width:75px;height:21px;background:linear-gradient(#f2f2f2,#e6e6e6);border:2px solid #2456a8"></div>
<div class="a" style="left:1063px;top:595px;width:75px;height:21px;background:linear-gradient(#f2f2f2,#e6e6e6);border:1px solid #adadad"></div>
<div class="a" style="left:1143px;top:595px;width:75px;height:21px;background:linear-gradient(#f2f2f2,#e6e6e6);border:1px solid #adadad"></div>
<div class="t" style="left:983px;width:75px;text-align:center;top:600px;color:#000">OK</div>
<div class="t" style="left:1063px;width:75px;text-align:center;top:600px;color:#000">Cancel</div>
<div class="t" style="left:1143px;width:75px;text-align:center;top:600px;color:#000">Apply</div>
<div class="a" style="left:548px;top:240px;width:440px;height:161px;background:#fff;border:1px solid #7a9bd0"></div>
<div class="a" style="left:549px;top:243px;width:438px;height:17px;background:#f2f2f2"></div>
<div class="t" style="left:553px;top:246px;color:#000;font-size:10.6px">Duck, Donald</div>
<div class="t" style="left:777px;width:200px;text-align:right;top:246px;color:#000;letter-spacing:-0.15px">11 Jun 1972</div>
<div class="t" style="left:553px;top:263px;color:#000;font-size:10.6px">DWARF, BASHFUL</div>
<div class="t" style="left:777px;width:200px;text-align:right;top:263px;color:#000;letter-spacing:-0.15px">22 Feb 2022</div>
<div class="a" style="left:549px;top:277px;width:438px;height:17px;background:#f2f2f2"></div>
<div class="t" style="left:553px;top:280px;color:#000;font-size:10.6px">DWARF, DOPEY</div>
<div class="t" style="left:777px;width:200px;text-align:right;top:280px;color:#000;letter-spacing:-0.15px">05 Feb 2000</div>
<div class="t" style="left:553px;top:297px;color:#000;font-size:10.6px">DWARF, FAT</div>
<div class="t" style="left:777px;width:200px;text-align:right;top:297px;color:#000;letter-spacing:-0.15px">31 Jan 2000</div>
<div class="a" style="left:549px;top:311px;width:438px;height:17px;background:#f2f2f2"></div>
<div class="t" style="left:553px;top:314px;color:#000;font-size:10.6px">DWARF, HAPPY</div>
<div class="t" style="left:777px;width:200px;text-align:right;top:314px;color:#000;letter-spacing:-0.15px">01 Feb 2000</div>
<div class="t" style="left:553px;top:331px;color:#000;font-size:10.6px">DWARF, SILLY</div>
<div class="t" style="left:777px;width:200px;text-align:right;top:331px;color:#000;letter-spacing:-0.15px">02 Feb 2000</div>
<div class="a" style="left:549px;top:345px;width:438px;height:17px;background:#f2f2f2"></div>
<div class="t" style="left:553px;top:348px;color:#000;font-size:10.6px">DWARF, SLEEPY</div>
<div class="t" style="left:777px;width:200px;text-align:right;top:348px;color:#000;letter-spacing:-0.15px">04 Feb 2000</div>
<div class="t" style="left:553px;top:365px;color:#000;font-size:10.6px">DWARF, SNEEZY</div>
<div class="t" style="left:777px;width:200px;text-align:right;top:365px;color:#000;letter-spacing:-0.15px">31 Jan 2000</div>
<div class="a" style="left:549px;top:379px;width:438px;height:21px;background:#fdfde8"></div>
<div class="t" style="left:553px;top:384px;color:#000">All matches are shown</div>
<div class="a" style="left:936px;top:381px;width:51px;height:18px;background:#f0f0f0;border:1px solid #dcdcdc"></div>
<div class="t" style="left:936px;width:51px;text-align:center;top:384px;color:#a0a0a0">New</div>
<div class="a" style="left:547px;top:220px;width:19px;height:20px;border:3px solid #e5474a"></div>
<div class="a" style="left:549px;top:243px;width:74px;height:18px;border:3px solid #e5474a"></div>
<div class="a" style="left:561.2px;top:188.2px;width:39.6px;height:39.6px;border-radius:50%;background:#e24646;box-shadow:0 1px 2px rgba(0,0,0,0.35)"></div>
<div class="t" style="left:560.5px;width:40px;text-align:center;top:194.7px;font-size:29px;line-height:27px;color:#fff">2</div>
<div class="a" style="left:626.2px;top:222.7px;width:39.6px;height:39.6px;border-radius:50%;background:#e24646;box-shadow:0 1px 2px rgba(0,0,0,0.35)"></div>
<div class="t" style="left:625.5px;width:40px;text-align:center;top:229.2px;font-size:29px;line-height:27px;color:#fff">3</div>
</body></html>
